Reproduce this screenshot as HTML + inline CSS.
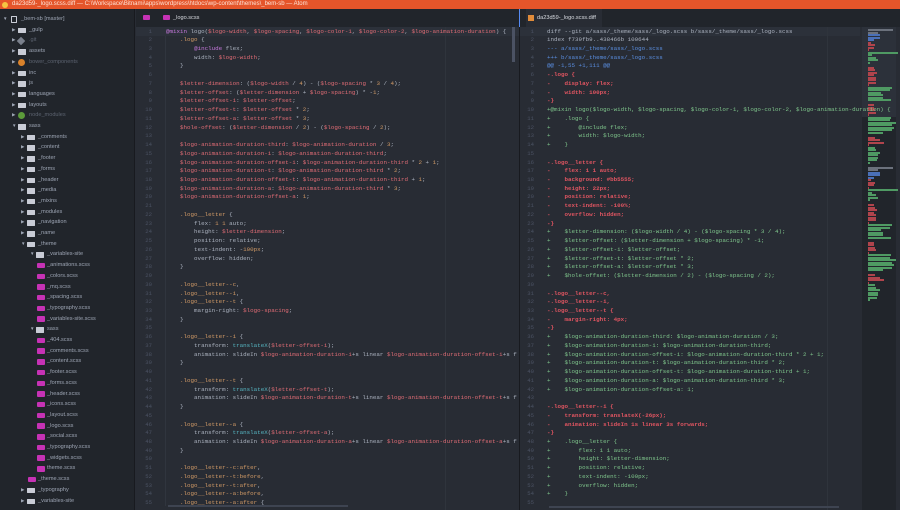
<!DOCTYPE html>
<html><head><meta charset="utf-8"><style>
*{margin:0;padding:0;box-sizing:border-box}
body{width:900px;height:510px;overflow:hidden;background:#282c34;position:relative;font-family:"Liberation Sans",sans-serif}
#title{position:absolute;left:0;top:0;width:900px;height:9px;background:#e5552a;color:#fde4d8;font-size:6px;line-height:9px;padding-left:12px;white-space:nowrap}
#title .ic{position:absolute;left:2px;top:1.5px;width:6px;height:6px;border-radius:50%;background:#f5c542}
#side{position:absolute;left:0;top:9px;width:135px;height:501px;background:#21252b;border-right:1px solid #181a1f}
.row{position:absolute;height:10.7px;line-height:10.7px;font-size:5.6px;color:#9da5b4;white-space:nowrap}
.row .ar{position:absolute;top:0;font-size:4.5px;color:#9da5b4}
.row .fo{position:absolute;top:3px;width:8px;height:5.5px;background:#c9ccd6;border-radius:0.5px}
.row .fi{position:absolute;top:2.8px;width:8px;height:5.5px;background:#c632b5;border-radius:1px}
.row .t{position:absolute;top:0}
.dim{color:#5c6370!important}
.tabs{position:absolute;top:9px;height:18px;background:#21252b}
.tab{position:absolute;top:9px;height:18px;line-height:18px;font-size:5.6px;color:#d7dae0;white-space:nowrap}
.code{position:absolute;font-family:"Liberation Mono",monospace;font-size:5.85px;line-height:8.74px;white-space:pre;color:#abb2bf}
.ln{position:absolute;font-family:"Liberation Mono",monospace;font-size:5.6px;line-height:8.74px;white-space:pre;color:#4b5263;text-align:right}
.r{color:#e06c75}.o{color:#d19a66}.p{color:#c678dd}.b{color:#61afef}.c{color:#56b6c2}.y{color:#e5c07b}
.dr{color:#e05561;font-weight:bold}.dg{color:#7fc68c}.db{color:#5a8ee0}
</style></head><body>
<div id="title"><span class="ic"></span>da23d59-_logo.scss.diff — C:\Workspace\Bitnami\apps\wordpress\htdocs\wp-content\themes\_bem-sb — Atom</div>
<div id="side">
<div class="row" style="top:5px;left:3px"><span class="ar" style="left:0">▼</span><span class="fo" style="left:8px;width:6px;height:7px;top:2px;background:none;border:1px solid #c9ccd6"></span><span class="t" style="left:18px">_bem-sb [master]</span></div>
<div id="rows"></div>
</div>
<div class="tabs" style="left:136px;width:383px"></div>
<div class="tab" style="left:143px"><span style="display:inline-block;width:7px;height:5px;background:#c632b5;border-radius:1px;vertical-align:middle"></span></div>
<div class="tab" style="left:163px"><span style="display:inline-block;width:7px;height:5px;background:#c632b5;border-radius:1px;vertical-align:middle;margin-right:3px"></span>_logo.scss</div>
<div class="tabs" style="left:519px;width:381px;border-left:1.5px solid #568af2"></div>
<div class="tab" style="left:526px;background:#282c34;padding:0 6px 0 2px"><span style="display:inline-block;width:6px;height:6px;background:#e08b3a;vertical-align:middle;margin-right:3px"></span>da23d59-_logo.scss.diff</div>
<div style="position:absolute;left:136px;top:27px;width:383px;height:9px;background:#2c313a"></div>
<div style="position:absolute;left:520px;top:27px;width:340px;height:9px;background:#2c313a"></div>
<div style="position:absolute;left:165px;top:36px;width:1px;height:470px;background:#30353e"></div>
<div style="position:absolute;left:445px;top:27px;width:1px;height:483px;background:#2f343c"></div>
<div style="position:absolute;left:827px;top:27px;width:1px;height:483px;background:#2f343c"></div>
<div style="position:absolute;left:519px;top:27px;width:1px;height:483px;background:#181a1f"></div>
<div style="position:absolute;left:512px;top:27px;width:3px;height:35px;background:#4b5263"></div>
<div style="position:absolute;left:168px;top:505px;width:180px;height:2px;background:#3e4451"></div>
<div style="position:absolute;left:549px;top:506px;width:290px;height:2px;background:#3e4451"></div>
<div id="mm" style="position:absolute;left:862px;top:27px;width:34px;height:483px;background:#21252b"><div style="position:absolute;left:0;top:0;width:34px;height:90px;background:#2c313a"></div></div>
<div class="ln" id="ln1" style="left:136px;top:27.5px;width:16px"></div>
<div class="code" id="c1" style="left:166px;top:27.5px"></div>
<div class="ln" id="ln2" style="left:520px;top:27.5px;width:14px"></div>
<div class="code" id="c2" style="left:547px;top:27.5px"></div>
<script>
var rows=[
[1,'fo','_gulp'],[1,'git','.git',1],[1,'fo','assets'],[1,'bw','bower_components',1],[1,'fo','inc'],[1,'fo','js'],[1,'fo','languages'],[1,'fo','layouts'],[1,'nm','node_modules',1],[1,'fo','sass','o'],
[2,'fo','_comments'],[2,'fo','_content'],[2,'fo','_footer'],[2,'fo','_forms'],[2,'fo','_header'],[2,'fo','_media'],[2,'fo','_mixins'],[2,'fo','_modules'],[2,'fo','_navigation'],[2,'fo','_name'],[2,'fo','_theme','o'],
[3,'fo','_variables-site','o'],[4,'fi','_animations.scss'],[4,'fi','_colors.scss'],[4,'fi','_mq.scss'],[4,'fi','_spacing.scss'],[4,'fi','_typography.scss'],[4,'fi','_variables-site.scss'],
[3,'fo','sass','o'],[4,'fi','_404.scss'],[4,'fi','_comments.scss'],[4,'fi','_content.scss'],[4,'fi','_footer.scss'],[4,'fi','_forms.scss'],[4,'fi','_header.scss'],[4,'fi','_icons.scss'],[4,'fi','_layout.scss'],[4,'fi','_logo.scss'],[4,'fi','_social.scss'],[4,'fi','_typography.scss'],[4,'fi','_widgets.scss'],[4,'fi','theme.scss'],
[3,'fi','_theme.scss'],[2,'fo','_typography'],[2,'fo','_variables-site']];
var h='';
rows.forEach(function(r,i){
 var top=5+(i+1)*10.7, L=r[0], ax=3+L*9, ix=ax+6, tx=ix+11, fold=(r[1]!='fi');
 if(r[1]=='fi'){ix=ax-2;tx=ix+10}
 var icon;
 if(r[1]=='git')icon='<span class="fo" style="left:'+ix+'px;background:#7a808c;width:6px;height:6px;transform:rotate(45deg);top:2.5px"></span>';
 else if(r[1]=='bw')icon='<span class="fo" style="left:'+ix+'px;background:#d9822b;border-radius:50%;width:7px;height:7px;top:2px"></span>';
 else if(r[1]=='nm')icon='<span class="fo" style="left:'+ix+'px;background:#5c9b3a;border-radius:50%;width:7px;height:7px;top:2px"></span>';
 else icon='<span class="'+r[1]+'" style="left:'+ix+'px"></span>';
 h+='<div class="row'+(r[3]===1?' dim':'')+'" style="top:'+top+'px;left:0">'+(fold?'<span class="ar" style="left:'+ax+'px">'+(r[3]=='o'?'▼':'▶')+'</span>':'')+icon+'<span class="t'+(r[3]===1?' dim':'')+'" style="left:'+tx+'px">'+r[2]+'</span></div>';
});
document.getElementById('rows').innerHTML=h;
function e(s){return s.replace(/&/g,'&amp;').replace(/</g,'&lt;')}
function hl(s){
 s=e(s);
 return s.replace(/(@mixin|@include)|(\$[\w-]+)|(translateX)|(\b\d+(px)?\b)|(^\s*\.[\w-]+(:\w+)?)/g,function(m,a,v,t,n,px,sel){
  if(a)return '<span class="p">'+m+'</span>';
  if(v)return '<span class="r">'+m+'</span>';
  if(t)return '<span class="c">'+m+'</span>';
  if(n)return '<span class="o">'+m+'</span>';
  if(sel)return '<span class="o">'+m+'</span>';
  return m;});
}
var L1=['@mixin logo($logo-width, $logo-spacing, $logo-color-1, $logo-color-2, $logo-animation-duration) {','    .logo {','        @include flex;','        width: $logo-width;','    }','',
'    $letter-dimension: ($logo-width / 4) - ($logo-spacing * 3 / 4);','    $letter-offset: ($letter-dimension + $logo-spacing) * -1;','    $letter-offset-i: $letter-offset;','    $letter-offset-t: $letter-offset * 2;','    $letter-offset-a: $letter-offset * 3;','    $hole-offset: ($letter-dimension / 2) - ($logo-spacing / 2);','',
'    $logo-animation-duration-third: $logo-animation-duration / 3;','    $logo-animation-duration-i: $logo-animation-duration-third;','    $logo-animation-duration-offset-i: $logo-animation-duration-third * 2 + 1;','    $logo-animation-duration-t: $logo-animation-duration-third * 2;','    $logo-animation-duration-offset-t: $logo-animation-duration-third + 1;','    $logo-animation-duration-a: $logo-animation-duration-third * 3;','    $logo-animation-duration-offset-a: 1;','',
'    .logo__letter {','        flex: 1 1 auto;','        height: $letter-dimension;','        position: relative;','        text-indent: -100px;','        overflow: hidden;','    }','',
'    .logo__letter--c,','    .logo__letter--i,','    .logo__letter--t {','        margin-right: $logo-spacing;','    }','',
'    .logo__letter--i {','        transform: translateX($letter-offset-i);','        animation: slideIn $logo-animation-duration-i+s linear $logo-animation-duration-offset-i+s f','    }','',
'    .logo__letter--t {','        transform: translateX($letter-offset-t);','        animation: slideIn $logo-animation-duration-t+s linear $logo-animation-duration-offset-t+s f','    }','',
'    .logo__letter--a {','        transform: translateX($letter-offset-a);','        animation: slideIn $logo-animation-duration-a+s linear $logo-animation-duration-offset-a+s f','    }','',
'    .logo__letter--c:after,','    .logo__letter--t:before,','    .logo__letter--t:after,','    .logo__letter--a:before,','    .logo__letter--a:after {'];
var ln='',c='';
L1.forEach(function(s,i){ln+=(i+1)+'\n';c+=hl(s)+'\n'});
document.getElementById('ln1').textContent=ln;document.getElementById('c1').innerHTML=c;
var L2=[['w','diff --git a/sass/_theme/sass/_logo.scss b/sass/_theme/sass/_logo.scss'],['w','index f739fb9..438466b 100644'],['db','--- a/sass/_theme/sass/_logo.scss'],['db','+++ b/sass/_theme/sass/_logo.scss'],['db','@@ -1,55 +1,111 @@'],
['dr','-.logo {'],['dr','-    display: flex;'],['dr','-    width: 100px;'],['dr','-}'],
['dg','+@mixin logo($logo-width, $logo-spacing, $logo-color-1, $logo-color-2, $logo-animation-duration) {'],['dg','+    .logo {'],['dg','+        @include flex;'],['dg','+        width: $logo-width;'],['dg','+    }'],['dg',''],
['dr','-.logo__letter {'],['dr','-    flex: 1 1 auto;'],['dr','-    background: #bb5555;'],['dr','-    height: 22px;'],['dr','-    position: relative;'],['dr','-    text-indent: -100%;'],['dr','-    overflow: hidden;'],['dr','-}'],
['dg','+    $letter-dimension: ($logo-width / 4) - ($logo-spacing * 3 / 4);'],['dg','+    $letter-offset: ($letter-dimension + $logo-spacing) * -1;'],['dg','+    $letter-offset-i: $letter-offset;'],['dg','+    $letter-offset-t: $letter-offset * 2;'],['dg','+    $letter-offset-a: $letter-offset * 3;'],['dg','+    $hole-offset: ($letter-dimension / 2) - ($logo-spacing / 2);'],['dg',''],
['dr','-.logo__letter--c,'],['dr','-.logo__letter--i,'],['dr','-.logo__letter--t {'],['dr','-    margin-right: 4px;'],['dr','-}'],
['dg','+    $logo-animation-duration-third: $logo-animation-duration / 3;'],['dg','+    $logo-animation-duration-i: $logo-animation-duration-third;'],['dg','+    $logo-animation-duration-offset-i: $logo-animation-duration-third * 2 + 1;'],['dg','+    $logo-animation-duration-t: $logo-animation-duration-third * 2;'],['dg','+    $logo-animation-duration-offset-t: $logo-animation-duration-third + 1;'],['dg','+    $logo-animation-duration-a: $logo-animation-duration-third * 3;'],['dg','+    $logo-animation-duration-offset-a: 1;'],['dg',''],
['dr','-.logo__letter--i {'],['dr','-    transform: translateX(-26px);'],['dr','-    animation: slideIn 1s linear 3s forwards;'],['dr','-}'],
['dg','+    .logo__letter {'],['dg','+        flex: 1 1 auto;'],['dg','+        height: $letter-dimension;'],['dg','+        position: relative;'],['dg','+        text-indent: -100px;'],['dg','+        overflow: hidden;'],['dg','+    }'],['dg','']];
ln='';c='';
L2.forEach(function(s,i){ln+=(i+1)+'\n';c+='<span class="'+s[0]+'">'+e(s[1])+'</span>\n'});
document.getElementById('ln2').textContent=ln;document.getElementById('c2').innerHTML=c;
var mm='',y=2;
L2.concat(L2).forEach(function(s){var w=Math.min(30,s[1].length*0.35);if(w>0&&y<470)mm+='<div style="position:absolute;left:6px;top:'+y+'px;width:'+w+'px;height:2px;background:'+(s[0]=='dr'?'#b0444c':s[0]=='dg'?'#4f9a63':s[0]=='db'?'#4a70b8':'#6b717c')+'"></div>';y+=2.5});
document.getElementById('mm').innerHTML+=mm;
</script>
</body></html>
